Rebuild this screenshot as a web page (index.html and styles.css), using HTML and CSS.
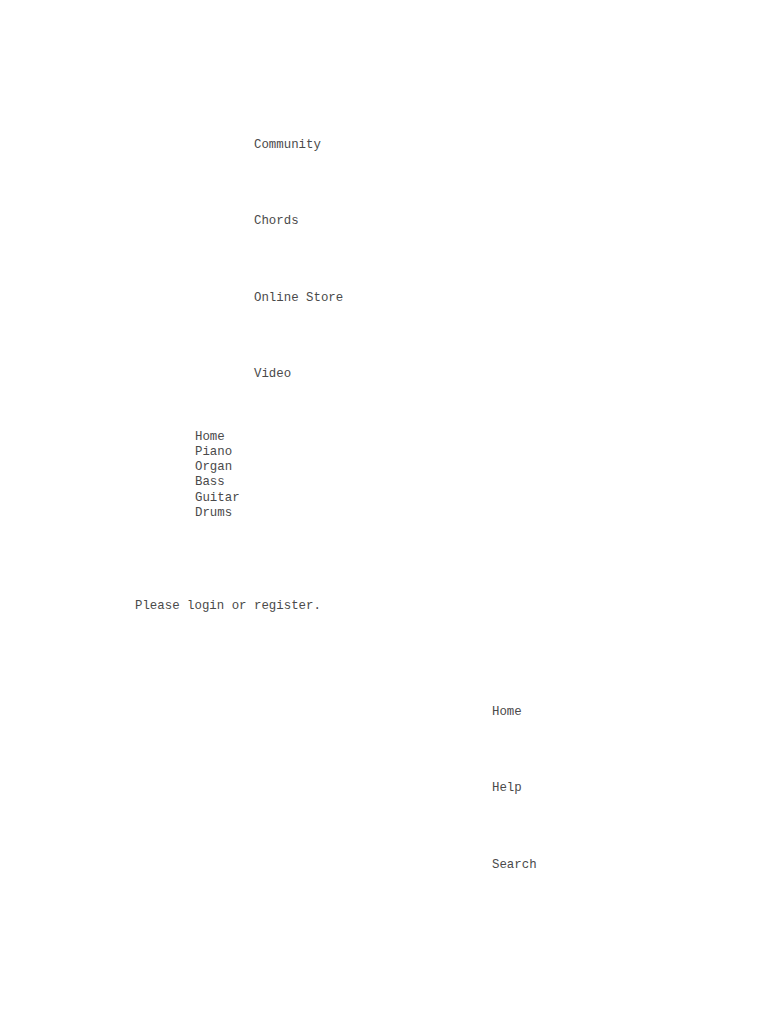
FILE: index.html
```html
<!DOCTYPE html>
<html>
<head>
<meta charset="utf-8">
<link rel="stylesheet" href="styles.css">
</head>
<body>
<div class="page">
  <ul class="topnav">
    <li>Community</li>
    <li>Chords</li>
    <li>Online Store</li>
    <li>Video</li>
  </ul>
  <ul class="cats">
    <li>Home</li>
    <li>Piano</li>
    <li>Organ</li>
    <li>Bass</li>
    <li>Guitar</li>
    <li>Drums</li>
  </ul>
  <p class="login">Please login or register.</p>
  <ul class="footnav">
    <li>Home</li>
    <li>Help</li>
    <li>Search</li>
  </ul>
</div>
</body>
</html>
```
FILE: styles.css
```css
html, body {
  margin: 0;
  padding: 0;
  background: #ffffff;
}
.page {
  font-family: "Courier New", "Nimbus Mono PS", "Nimbus Mono L", FreeMono, Courier, "Liberation Mono", monospace;
  font-size: 12.4px;
  line-height: 15.3px;
  color: #4a4a4a;
  display: flex;
  flex-direction: column;
  padding-top: 138px;
}
ul {
  list-style: none;
  margin: 0;
  padding: 0;
}
.topnav {
  padding-left: 254px;
  display: flex;
  flex-direction: column;
  gap: 61.2px;
}
.cats {
  padding-left: 195px;
  margin-top: 46.8px;
}
.login {
  margin: 77.7px 0 0 0;
  padding-left: 135px;
}
.footnav {
  padding-left: 492px;
  margin-top: 90.7px;
  display: flex;
  flex-direction: column;
  gap: 61.2px;
}
```
